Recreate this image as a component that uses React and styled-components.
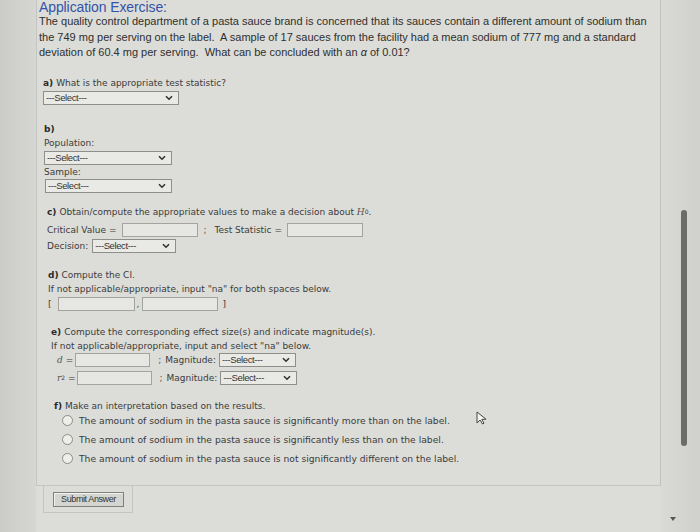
import React from 'react';
import styled, { createGlobalStyle } from 'styled-components';

const GlobalStyle = createGlobalStyle`
  html, body {
    margin: 0;
    padding: 0;
    background: #d2d3ce;
  }
  body {
    width: 700px;
    height: 532px;
    overflow: hidden;
  }
`;

const Screen = styled.div`
  display: flex;
  width: 700px;
  height: 532px;
  background: linear-gradient(90deg, #cbccc7 0px, #d6d7d2 36px);
`;

const Page = styled.div`
  margin-left: 36px;
  width: 625px;
  display: flex;
  flex-direction: column;
  background: #dcddd8;
`;

const Panel = styled.div`
  position: relative;
  height: 486px;
  box-sizing: border-box;
  padding-left: 2px;
  border-left: 1px solid #c4c5c0;
  border-right: 1px solid #c0c1bc;
  border-bottom: 1px solid #c4c5c0;
`;

const Title = styled.h2`
  margin: 0;
  height: 14px;
  padding-top: 1px;
  box-sizing: border-box;
  font: 400 14px/13px "Liberation Sans", Arial, sans-serif;
  color: #3552a8;
  letter-spacing: -0.1px;
  white-space: nowrap;
`;

const Prompt = styled.p`
  margin: 0;
  font: 400 11px/15.5px "Liberation Sans", Arial, sans-serif;
  color: #2f2f2f;
  white-space: nowrap;
`;

const Section = styled.div`
  margin-top: ${(p) => p.$top}px;
  padding-left: ${(p) => p.$indent}px;
  display: flex;
  flex-direction: column;
  font: 400 9px/14px "DejaVu Sans", Verdana, sans-serif;
  color: #3b3b3b;
`;

const Line = styled.div`
  height: 14px;
  display: flex;
  align-items: center;
  white-space: nowrap;
  margin-top: ${(p) => p.$top || 0}px;
  padding-left: ${(p) => p.$pad || 0}px;
`;

const Letter = styled.b`
  font-weight: 700;
  color: #2a2a2a;
  margin-right: 3px;
`;

const SelectBox = styled.div`
  width: ${(p) => p.$w}px;
  height: 14px;
  box-sizing: border-box;
  border: 1px solid #8e8f8b;
  background: #e9eae6;
  display: flex;
  align-items: center;
  justify-content: space-between;
  padding: 0 5px 0 2px;
  font: 400 9.5px/12px "Liberation Sans", Arial, sans-serif;
  color: #333;
  letter-spacing: -0.4px;
  margin-left: ${(p) => p.$ml || 0}px;
`;

const Field = styled.div`
  width: ${(p) => p.$w}px;
  height: 14px;
  box-sizing: border-box;
  border: 1px solid #a3a4a0;
  background: #e6e7e3;
  margin: 0 ${(p) => p.$mr || 0}px 0 ${(p) => p.$ml || 0}px;
`;

const Sep = styled.span`
  color: #555;
  margin: 0 ${(p) => p.$r || 4}px 0 ${(p) => p.$l || 4}px;
`;

const Italic = styled.i`
  font-family: "DejaVu Serif", serif;
  font-size: 9px;
  color: #555;
`;

const Options = styled.div`
  display: flex;
  flex-direction: column;
  gap: 5px;
  margin-top: 1px;
  padding-left: 8px;
`;

const Option = styled.label`
  height: 14px;
  display: flex;
  align-items: center;
  gap: 6px;
  white-space: nowrap;
  font-size: 9.2px;
`;

const Radio = styled.span`
  width: 9px;
  height: 9px;
  border-radius: 50%;
  border: 1px solid #8b8c88;
  background: #eeefeb;
`;

const SubmitTab = styled.div`
  width: 90px;
  height: 27px;
  margin-left: 7px;
  border-left: 1px solid #c4c5c0;
  border-right: 1px solid #c4c5c0;
  border-bottom: 1px solid #c4c5c0;
  box-sizing: border-box;
  display: flex;
  align-items: center;
  padding-left: 9px;
`;

const SubmitButton = styled.button`
  height: 15px;
  width: 71px;
  padding: 0;
  border: 1px solid #7f807c;
  background: #d4d5d0;
  box-shadow: inset 1px 1px 0 #f2f2ef;
  font: 400 9px/12px "Liberation Sans", Arial, sans-serif;
  color: #333;
  letter-spacing: -0.4px;
`;

const Gutter = styled.div`
  flex: 1;
  position: relative;
  background: linear-gradient(90deg, #d9dad5 0px, #d0d1cc 100%);
`;

const ScrollThumb = styled.div`
  position: absolute;
  left: 20px;
  top: 210px;
  width: 6px;
  height: 236px;
  border-radius: 3px;
  background: #6b6c69;
`;

const ScrollArrow = styled.div`
  position: absolute;
  left: 9px;
  top: 517px;
  width: 0;
  height: 0;
  border-left: 3px solid transparent;
  border-right: 3px solid transparent;
  border-top: 4px solid #555;
`;

const Cursor = styled.svg`
  position: absolute;
  left: 439px;
  top: 411px;
`;

const Chevron = () => (
  <svg width="8" height="6" viewBox="0 0 8 6">
    <path d="M1 1.2 L4 4.2 L7 1.2" fill="none" stroke="#333" strokeWidth="1.6" />
  </svg>
);

const Select = ({ w, ml, label = '---Select---' }) => (
  <SelectBox $w={w} $ml={ml}>
    <span>{label}</span>
    <Chevron />
  </SelectBox>
);

export default function App() {
  return (
    <>
      <GlobalStyle />
      <Screen>
        <Page>
          <Panel>
            <Title>Application Exercise:</Title>
            <Prompt>
              The quality control department of a pasta sauce brand is concerned that its sauces contain a different amount of sodium than
              <br />
              the 749 mg per serving on the label.&nbsp; A sample of 17 sauces from the facility had a mean sodium of 777 mg and a standard
              <br />
              deviation of 60.4 mg per serving.&nbsp; What can be concluded with an <i>α</i> of 0.01?
            </Prompt>

            <Section $top={15} $indent={4}>
              <Line><Letter>a)</Letter>What is the appropriate test statistic?</Line>
              <Line $top={1}><Select w={136} ml={0} label="---Select---" /></Line>
            </Section>

            <Section $top={17} $indent={5}>
              <Line><Letter>b)</Letter></Line>
              <Line>Population:</Line>
              <Line $top={1}><Select w={128} /></Line>
              <Line>Sample:</Line>
              <Select w={127} ml={1} />
            </Section>

            <Section $top={12} $indent={8}>
              <Line><Letter>c)</Letter>Obtain/compute the appropriate values to make a decision about&nbsp;<Italic>H</Italic><sub style={{ fontSize: 6 }}>0</sub>.</Line>
              <Line $top={4}>
                Critical Value =<Field $w={76} $ml={6} />
                <Sep $l={5} $r={8}>;</Sep>Test Statistic =<Field $w={76} $ml={5} />
              </Line>
              <Line $top={2}>Decision:<Select w={84} ml={4} label="---Select---" /></Line>
            </Section>

            <Section $top={15} $indent={9}>
              <Line><Letter>d)</Letter>Compute the CI.</Line>
              <Line>If not applicable/appropriate, input "na" for both spaces below.</Line>
              <Line $top={1}>
                [<Field $w={77} $ml={6} />
                <Sep $l={2} $r={3}>,</Sep>
                <Field $w={76} $mr={4} />]
              </Line>
            </Section>

            <Section $top={14} $indent={12}>
              <Line><Letter>e)</Letter>Compute the corresponding effect size(s) and indicate magnitude(s).</Line>
              <Line>If not applicable/appropriate, input and select "na" below.</Line>
              <Line $pad={6}>
                <Italic>d</Italic>&nbsp;=<Field $w={75} $ml={2} />
                <Sep $l={8} $r={4}>;</Sep>Magnitude:<Select w={77} ml={3} label="---Select---" />
              </Line>
              <Line $top={4} $pad={6}>
                <Italic>r</Italic><sup style={{ fontSize: 6 }}>2</sup>&nbsp;=<Field $w={75} $ml={1} />
                <Sep $l={8} $r={4}>;</Sep>Magnitude:<Select w={77} ml={3} label="---Select---" />
              </Line>
            </Section>

            <Section $top={14} $indent={15}>
              <Line><Letter>f)</Letter>Make an interpretation based on the results.</Line>
              <Options>
                <Option><Radio />The amount of sodium in the pasta sauce is significantly more than on the label.</Option>
                <Option><Radio />The amount of sodium in the pasta sauce is significantly less than on the label.</Option>
                <Option><Radio />The amount of sodium in the pasta sauce is not significantly different on the label.</Option>
              </Options>
            </Section>

            <Cursor width="12" height="14" viewBox="0 0 12 14">
              <path d="M1 1 L1 12 L4 9 L6.5 13 L8 12.2 L5.8 8.4 L10 8.2 Z" fill="#f4f4f2" stroke="#444" strokeWidth="1" />
            </Cursor>
          </Panel>
          <SubmitTab>
            <SubmitButton>Submit Answer</SubmitButton>
          </SubmitTab>
        </Page>
        <Gutter>
          <ScrollThumb />
          <ScrollArrow />
        </Gutter>
      </Screen>
    </>
  );
}
